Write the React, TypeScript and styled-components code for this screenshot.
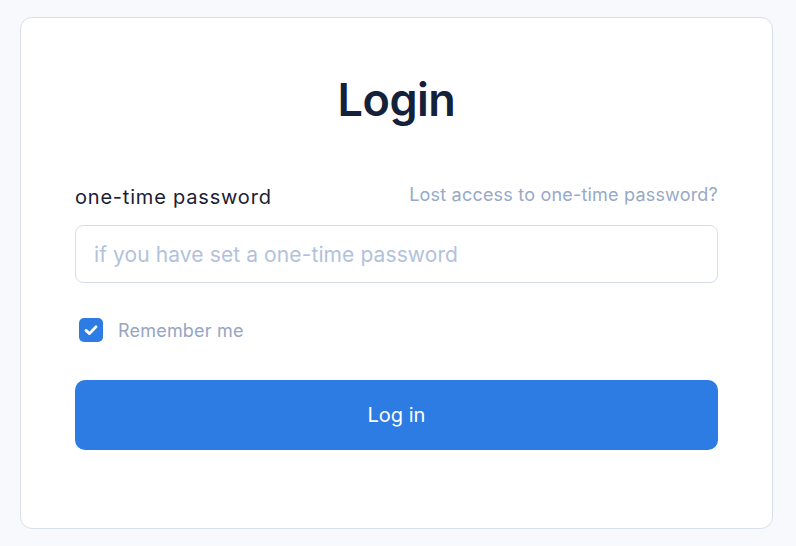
import React, { useState } from "react";
import styled, { createGlobalStyle } from "styled-components";

const GlobalStyle = createGlobalStyle`
  html, body {
    margin: 0;
    padding: 0;
    background: #f7f9fc;
    font-family: Inter, "Noto Sans", sans-serif;
  }
`;

export default function App() {
  const [remember, setRemember] = useState(true);

  return (
    <Page>
      <GlobalStyle />
      <Card>
        <Title>Login</Title>
        <LabelRow>
          <Label>one-time password</Label>
          <HelpLink href="#">Lost access to one-time password?</HelpLink>
        </LabelRow>
        <Input placeholder="if you have set a one-time password" />
        <CheckRow onClick={() => setRemember(!remember)}>
          <Box checked={remember}>
            {remember && (
              <svg width="16" height="16" viewBox="0 0 16 16">
                <path
                  d="M3 8.4 L6.5 11.6 L13 4.8"
                  fill="none"
                  stroke="#fff"
                  strokeWidth="2.8"
                  strokeLinecap="round"
                  strokeLinejoin="round"
                />
              </svg>
            )}
          </Box>
          <CheckText>Remember me</CheckText>
        </CheckRow>
        <Button>Log in</Button>
      </Card>
    </Page>
  );
}

const Page = styled.div`
  padding: 17px 23px 17px 20px;
`;

const Card = styled.div`
  background: #fff;
  border: 1px solid #d6dfeb;
  border-radius: 12px;
  padding: 54px 54px 78px;
  display: flex;
  flex-direction: column;
`;

const Title = styled.h1`
  margin: 0 0 56px;
  text-align: center;
  font-size: 45px;
  font-weight: 600;
  color: #14213a;
  line-height: 56px;
  letter-spacing: -0.5px;
`;

const LabelRow = styled.div`
  display: flex;
  justify-content: space-between;
  align-items: center;
  margin-bottom: 16px;
`;

const Label = styled.label`
  font-size: 20px;
  letter-spacing: 0.8px;
  color: #1a2134;
  line-height: 24px;
`;

const HelpLink = styled.a`
  font-size: 18px;
  letter-spacing: 0.2px;
  color: #97a9c8;
  text-decoration: none;
  margin-bottom: 4px;
`;

const Input = styled.input`
  box-sizing: border-box;
  width: 100%;
  height: 58px;
  border: 1px solid #d6dee9;
  border-radius: 8px;
  padding: 0 18px;
  font-family: inherit;
  font-size: 21px;
  letter-spacing: 0.1px;
  color: #1a2134;
  outline: none;
  &::placeholder {
    color: #b3c2da;
  }
`;

const CheckRow = styled.div`
  display: flex;
  align-items: center;
  gap: 15px;
  margin: 35px 0 38px 4px;
  cursor: pointer;
`;

const Box = styled.span<{ checked: boolean }>`
  width: 24px;
  height: 24px;
  border-radius: 5px;
  background: ${(p) => (p.checked ? "#2d7be4" : "#fff")};
  border: ${(p) => (p.checked ? "none" : "1px solid #c5d0e0")};
  display: flex;
  align-items: center;
  justify-content: center;
`;

const CheckText = styled.span`
  font-size: 18px;
  letter-spacing: 0.2px;
  color: #96a5c2;
`;

const Button = styled.button`
  height: 70px;
  border: none;
  border-radius: 10px;
  background: #2d7ce4;
  color: #fff;
  font-family: inherit;
  font-size: 20px;
  cursor: pointer;
`;
